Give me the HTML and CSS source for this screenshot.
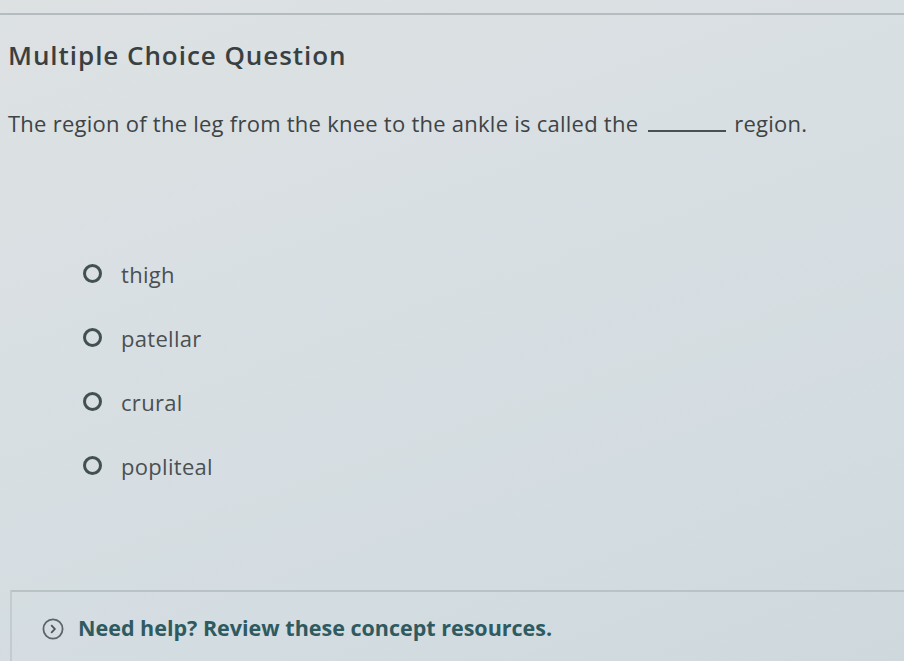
FILE: index.html
```html
<!DOCTYPE html>
<html>
<head>
<meta charset="utf-8">
<link rel="stylesheet" href="styles.css">
</head>
<body>
<div class="page">
  <div class="topline"></div>
  <h1 class="title">Multiple Choice Question</h1>
  <p class="question">The region of the leg from the knee to the ankle is called the <span class="blank"></span> region.</p>
  <ul class="options">
    <li class="option"><span class="radio"></span><span class="label">thigh</span></li>
    <li class="option"><span class="radio"></span><span class="label">patellar</span></li>
    <li class="option"><span class="radio"></span><span class="label">crural</span></li>
    <li class="option"><span class="radio"></span><span class="label">popliteal</span></li>
  </ul>
  <div class="help">
    <span class="help-icon">
      <svg width="22" height="22" viewBox="0 0 22 22"><circle cx="11" cy="11" r="9.6" fill="none" stroke="#5c6669" stroke-width="1.8"/><path d="M9.2 7.2 L12.8 11 L9.2 14.8" fill="none" stroke="#4a5558" stroke-width="1.8"/></svg>
    </span>
    <span class="help-text">Need help? Review these concept resources.</span>
  </div>
</div>
</body>
</html>
```
FILE: styles.css
```css
html, body {
  margin: 0;
  padding: 0;
}
body {
  width: 904px;
  height: 661px;
  overflow: hidden;
  background: linear-gradient(160deg, #dde1e2 0%, #d8dfe3 40%, #d3dce1 75%, #cfd8dc 100%);
  font-family: "Open Sans", Lato, sans-serif;
  color: #3c4143;
}
.page {
  display: flex;
  flex-direction: column;
  height: 661px;
}
.topline {
  margin-top: 13px;
  height: 2px;
  background: #b4bcbf;
}
.title {
  margin: 22px 0 0 8px;
  font-size: 26px;
  font-weight: 600;
  letter-spacing: 0.95px;
  color: #3a3f41;
  line-height: 36px;
}
.question {
  margin: 34px 0 0 8px;
  font-size: 22px;
  letter-spacing: 0.25px;
  color: #3e4446;
  line-height: 32px;
}
.blank {
  display: inline-block;
  width: 78px;
  height: 1px;
  border-bottom: 2px solid #4a4f51;
  margin: 0 2px 0 4px;
}
.options {
  list-style: none;
  margin: 120px 0 0 83px;
  padding: 0;
  display: flex;
  flex-direction: column;
  gap: 35px;
}
.option {
  display: flex;
  align-items: center;
  height: 29px;
}
.radio {
  width: 13px;
  height: 13px;
  border: 3px solid #435053;
  border-radius: 50%;
  margin-right: 19px;
}
.label {
  font-size: 22px;
  color: #4a5052;
  letter-spacing: 0.3px;
}
.help {
  margin: 110px 0 0 10px;
  border-top: 2px solid #b9c2c5;
  border-left: 2px solid #c3cbce;
  flex: 1;
  display: flex;
  align-items: flex-start;
  padding: 21px 0 0 30px;
}
.help-icon {
  display: flex;
  margin-right: 14px;
  margin-top: 5px;
}
.help-text {
  font-size: 21.5px;
  font-weight: 700;
  color: #2e5a60;
  letter-spacing: 0;
  line-height: 30px;
}
```
